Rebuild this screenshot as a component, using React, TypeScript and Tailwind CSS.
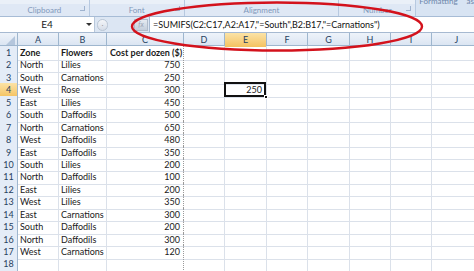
import React from "react";

const rows: [string, string, string][] = [
  ["Zone", "Flowers", "Cost per dozen ($)"],
  ["North", "Lilies", "750"],
  ["South", "Carnations", "250"],
  ["West", "Rose", "300"],
  ["East", "Lilies", "450"],
  ["South", "Daffodils", "500"],
  ["North", "Carnations", "650"],
  ["West", "Daffodils", "480"],
  ["East", "Daffodils", "350"],
  ["South", "Lilies", "200"],
  ["North", "Daffodils", "100"],
  ["East", "Lilies", "200"],
  ["West", "Lilies", "350"],
  ["East", "Carnations", "300"],
  ["South", "Daffodils", "200"],
  ["North", "Daffodils", "300"],
  ["West", "Carnations", "120"],
  ["", "", ""],
];

const letters = ["A", "B", "C", "D", "E", "F", "G", "H", "I", "J"];

const gridCols =
  "grid grid-cols-[18px_41px_48px_77px_41px_42px_41px_42px_41px_41px_50px]";

export default function App() {
  return (
    <div className="relative w-[474px] h-[271px] overflow-hidden bg-white font-['Lato',sans-serif] text-[9px] text-[#1a1a1a]">
      {/* Ribbon bottom */}
      <div className="h-[17px] flex bg-[#dfe8f5] border-b border-[#a7bcd6]">
        <div className="w-[91px] flex flex-col border-r border-[#b7c9e0]">
          <div className="h-[5px] bg-[#eaf0f8]" />
          <div className="flex-1 flex items-center justify-center relative text-[#7f98bb] text-[8px]">
            Clipboard
            <span className="absolute right-[4px] top-[2px] w-[5px] h-[5px] border-r border-b border-[#9fb3cf]" />
          </div>
        </div>
        <div className="w-[96px] flex flex-col border-r border-[#b7c9e0]">
          <div className="h-[5px] bg-[#eaf0f8]" />
          <div className="flex-1 flex items-center justify-center relative text-[#7f98bb] text-[8px]">
            Font
            <span className="absolute right-[4px] top-[2px] w-[5px] h-[5px] border-r border-b border-[#9fb3cf]" />
          </div>
        </div>
        <div className="w-[157px] flex flex-col border-r border-[#b7c9e0]">
          <div className="h-[5px] bg-[#eaf0f8]" />
          <div className="flex-1 flex items-center justify-center relative text-[#7f98bb] text-[8px]">
            Alignment
          </div>
        </div>
        <div className="w-[78px] flex flex-col border-r border-[#b7c9e0]">
          <div className="h-[5px] bg-[#eaf0f8]" />
          <div className="flex-1 flex items-center justify-center relative text-[#7f98bb] text-[8px]">
            Number
            <span className="absolute right-[4px] top-[2px] w-[5px] h-[5px] border-r border-b border-[#9fb3cf]" />
          </div>
        </div>
        <div className="flex-1 bg-[#d8e4f3] flex items-start pl-[3px] gap-[9px] text-[#6d86aa] text-[8px] leading-none">
          <span className="-mt-[3px]">Formatting</span>
          <span className="-mt-[3px]">as</span>
        </div>
      </div>

      {/* Formula bar */}
      <div className="h-[16px] flex items-stretch bg-[#dce6f3] border-b border-[#a6b9d1]">
        <div className="w-[95px] bg-white flex items-center relative border-r border-[#b8c7da]">
          <span className="flex-1 text-center text-[10px] text-[#222]">E4</span>
          <span className="absolute right-[2px] top-[6px] w-0 h-0 border-l-[3px] border-r-[3px] border-t-[3px] border-l-transparent border-r-transparent border-t-[#333]" />
        </div>
        <div className="w-[38px] flex items-center pl-[2px]">
          <div className="w-[11px] h-[12px] rounded-full border border-[#b9c5d4] bg-gradient-to-b from-[#f4f6f9] to-[#d6dde8] flex items-center justify-center text-[6px] text-[#888]">
            ·
          </div>
        </div>
        <div className="w-[16px] flex items-center justify-center">
          <div className="w-[14px] h-[12px] bg-gradient-to-b from-[#e5eaf1] to-[#c4cedb] border border-[#b0bccb] flex items-center justify-center italic text-[7px] text-[#9aa5b5]">
            fx
          </div>
        </div>
        <div className="flex-1 bg-white border-l border-[#a6b9d1] flex items-center pl-[3px] text-[9px] text-[#111] whitespace-nowrap">
          =SUMIFS(C2:C17,A2:A17,"=South",B2:B17,"=Carnations")
        </div>
      </div>

      {/* Column headers */}
      <div className={`${gridCols} h-[13px] bg-gradient-to-b from-[#eef3fa] to-[#dbe5f2] border-b border-[#9eb6ce] text-[#27415f]`}>
        <div className="relative border-r border-[#9eb6ce]">
          <span className="absolute right-[2px] bottom-[2px] w-0 h-0 border-l-[9px] border-t-[9px] border-l-transparent border-t-transparent border-b-0 border-r-0 [border-bottom:0] [border-left-color:transparent]" />
          <svg className="absolute right-[2px] bottom-[2px]" width="9" height="9" viewBox="0 0 9 9">
            <polygon points="9,0 9,9 0,9" fill="#b4c6dc" />
          </svg>
        </div>
        {letters.map((l) => (
          <div
            key={l}
            className={`flex items-center justify-center border-r border-[#9eb6ce] ${
              l === "E" ? "bg-gradient-to-b from-[#fbe3a6] to-[#f4c25f] text-[#27415f]" : ""
            }`}
          >
            {l}
          </div>
        ))}
        <div />
      </div>

      {/* Rows */}
      {rows.map((r, i) => {
        const n = i + 1;
        const bold = n === 1;
        return (
          <div key={n} className={`${gridCols} h-[12.45px]`}>
            <div
              className={`flex items-center justify-center border-r border-b border-[#9eb6ce] text-[#27415f] ${
                n === 4 ? "bg-gradient-to-b from-[#fbe3a6] to-[#f4c25f]" : "bg-[#e4ecf7]"
              }`}
            >
              {n}
            </div>
            <div className={`flex items-center pl-[2px] border-r border-b border-[#dbe1ea] whitespace-nowrap ${bold ? "font-bold" : ""}`}>
              {r[0]}
            </div>
            <div className={`flex items-center pl-[2px] border-r border-b border-[#dbe1ea] whitespace-nowrap ${bold ? "font-bold" : ""}`}>
              {r[1]}
            </div>
            <div
              className={`flex items-center ${bold ? "justify-start pl-[3px] font-bold" : "justify-end pr-[3px]"} border-b border-[#dbe1ea] border-r border-r-[#9a9a9a] [border-right-style:dotted] whitespace-nowrap`}
            >
              {r[2]}
            </div>
            <div className="border-r border-b border-[#dbe1ea]" />
            {n === 4 ? (
              <div className="relative border-r border-b border-[#dbe1ea]">
                <div className="absolute -left-[1px] -top-[1px] -right-[0px] -bottom-[0px] border-2 border-[#111] flex items-center justify-end pr-[2px]">
                  250
                </div>
                <span className="absolute -right-[2px] -bottom-[2px] w-[4px] h-[4px] bg-[#111] border border-white" />
              </div>
            ) : (
              <div className="border-r border-b border-[#dbe1ea]" />
            )}
            <div className="border-r border-b border-[#dbe1ea]" />
            <div className="border-r border-b border-[#dbe1ea]" />
            <div className="border-r border-b border-[#dbe1ea]" />
            <div className="border-r border-b border-[#dbe1ea]" />
            <div className="border-r border-b border-[#dbe1ea]" />
          </div>
        );
      })}

      {/* Red annotation ellipse */}
      <svg className="absolute left-0 top-0 pointer-events-none" width="474" height="271" viewBox="0 0 474 271">
        <ellipse cx="277" cy="26.5" rx="145" ry="24" fill="none" stroke="#d3121c" strokeWidth="2.4" />
      </svg>
    </div>
  );
}
